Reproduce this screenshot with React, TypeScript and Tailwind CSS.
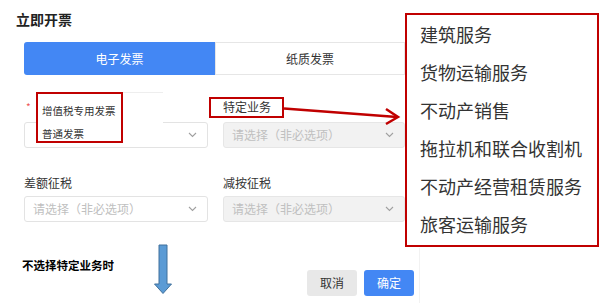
import React from "react";

function Chevron() {
  return (
    <svg width="9" height="6" viewBox="0 0 9 6" className="shrink-0">
      <polyline points="1,1 4.5,4.5 8,1" fill="none" stroke="#a0a0a0" strokeWidth="1.1" />
    </svg>
  );
}

function Select({ placeholder, disabled }: { placeholder?: string; disabled?: boolean }) {
  return (
    <div
      className={
        disabled
          ? "flex h-[26px] items-center justify-between rounded-[3px] border border-[#e6e6e6] bg-[#f2f2f2] pl-[8px] pr-[10px]"
          : "flex h-[26px] items-center justify-between rounded-[3px] border border-[#e3e3e3] bg-white pl-[8px] pr-[10px]"
      }
    >
      <span className="text-[12px] leading-none text-[#c0c0c0]">{placeholder}</span>
      <Chevron />
    </div>
  );
}

export default function App() {
  const items = ["建筑服务", "货物运输服务", "不动产销售", "拖拉机和联合收割机", "不动产经营租赁服务", "旅客运输服务"];
  return (
    <div className="relative h-[303px] w-[600px] overflow-hidden bg-white font-['Noto_Sans_CJK_SC',sans-serif] text-[#333]">
      <div className="pl-[16px] pt-[11px] text-[14px] font-bold leading-[16px] text-[#222]">立即开票</div>

      <div className="ml-[24px] mt-[15px] flex h-[33px] w-[381px]">
        <div className="flex w-[191px] items-center justify-center rounded-l-[3px] bg-[#4387f4] text-[12px] text-white">
          电子发票
        </div>
        <div className="flex flex-1 items-center justify-center border border-[#e6e6e6] text-[12px] text-[#333]">
          纸质发票
        </div>
      </div>

      <div className="ml-[24px] mt-[22px] flex gap-[15px]">
        <div className="w-[184px]">
          <div className="flex h-[20px] items-center text-[12px] leading-none">
            <span className="ml-[2px] text-[10px] text-[#e55]">*</span>
          </div>
          <div className="mt-[5px]">
            <Select />
          </div>
        </div>
        <div className="w-[182px]">
          <div className="flex h-[20px] items-center text-[12px] leading-none text-[#333]">特定业务</div>
          <div className="mt-[5px]">
            <Select placeholder="请选择（非必选项）" disabled />
          </div>
        </div>
      </div>

      <div className="ml-[24px] mt-[25px] flex gap-[15px]">
        <div className="w-[184px]">
          <div className="flex h-[20px] items-center text-[12px] leading-none text-[#333]">差额征税</div>
          <div className="mt-[3px]">
            <Select placeholder="请选择（非必选项）" />
          </div>
        </div>
        <div className="w-[182px]">
          <div className="flex h-[20px] items-center text-[12px] leading-none text-[#333]">减按征税</div>
          <div className="mt-[3px]">
            <Select placeholder="请选择（非必选项）" disabled />
          </div>
        </div>
      </div>

      <div className="mt-[36px] flex">
        <div className="w-[307px] pl-[22px] text-[11.5px] font-bold leading-[14px] text-black">不选择特定业务时</div>
        <div className="mt-[12px] flex gap-[7px]">
          <button className="flex h-[26px] w-[50px] items-center justify-center rounded-[3px] bg-[#e8e8e8] text-[12px] text-[#333]">
            取消
          </button>
          <button className="flex h-[26px] w-[50px] items-center justify-center rounded-[3px] bg-[#4387f4] text-[12px] text-white">
            确定
          </button>
        </div>
      </div>

      {/* open dropdown menu of invoice type */}
      <div className="absolute left-[36px] top-[92px] h-[55px] w-[127px] border-t border-[#eeeeee] bg-white">
        <div className="ml-[6px] mt-[10px] text-[10.5px] leading-[16px] text-[#333]">增值税专用发票</div>
        <div className="ml-[6px] mt-[7px] text-[10.5px] leading-[16px] text-[#333]">普通发票</div>
      </div>
      <div className="absolute left-[36px] top-[92px] h-[51px] w-[87px] border-2 border-[#c00000]" />

      {/* annotation on 特定业务 */}
      <div className="absolute left-[209px] top-[97px] h-[21px] w-[75px] border-2 border-[#c00000]" />
      <svg className="absolute left-[280px] top-[100px]" width="125" height="30" viewBox="0 0 125 30">
        <line x1="4" y1="8.5" x2="117" y2="17" stroke="#c00000" strokeWidth="2.5" />
        <polyline points="106,9 118,17 106,24" fill="none" stroke="#c00000" strokeWidth="2.5" />
      </svg>

      {/* faint modal edge */}
      <div className="absolute left-[419px] top-[248px] h-[55px] w-px bg-[#f2f2f2]" />

      {/* list of special businesses */}
      <div className="absolute left-[405px] top-[13px] h-[234px] w-[194px] border-2 border-[#c00000] bg-white pl-[13px]">
        {items.map((t) => (
          <div key={t} className="flex h-[38px] items-center text-[18px] leading-none text-[#333]">
            {t}
          </div>
        ))}
      </div>

      {/* blue down arrow */}
      <svg className="absolute left-[153px] top-[244px]" width="20" height="51" viewBox="0 0 20 51">
        <path d="M6 1 H14 V40 H18.5 L10 49.5 L1.5 40 H6 Z" fill="#5b9bd5" stroke="#41719c" strokeWidth="1" />
      </svg>
    </div>
  );
}
